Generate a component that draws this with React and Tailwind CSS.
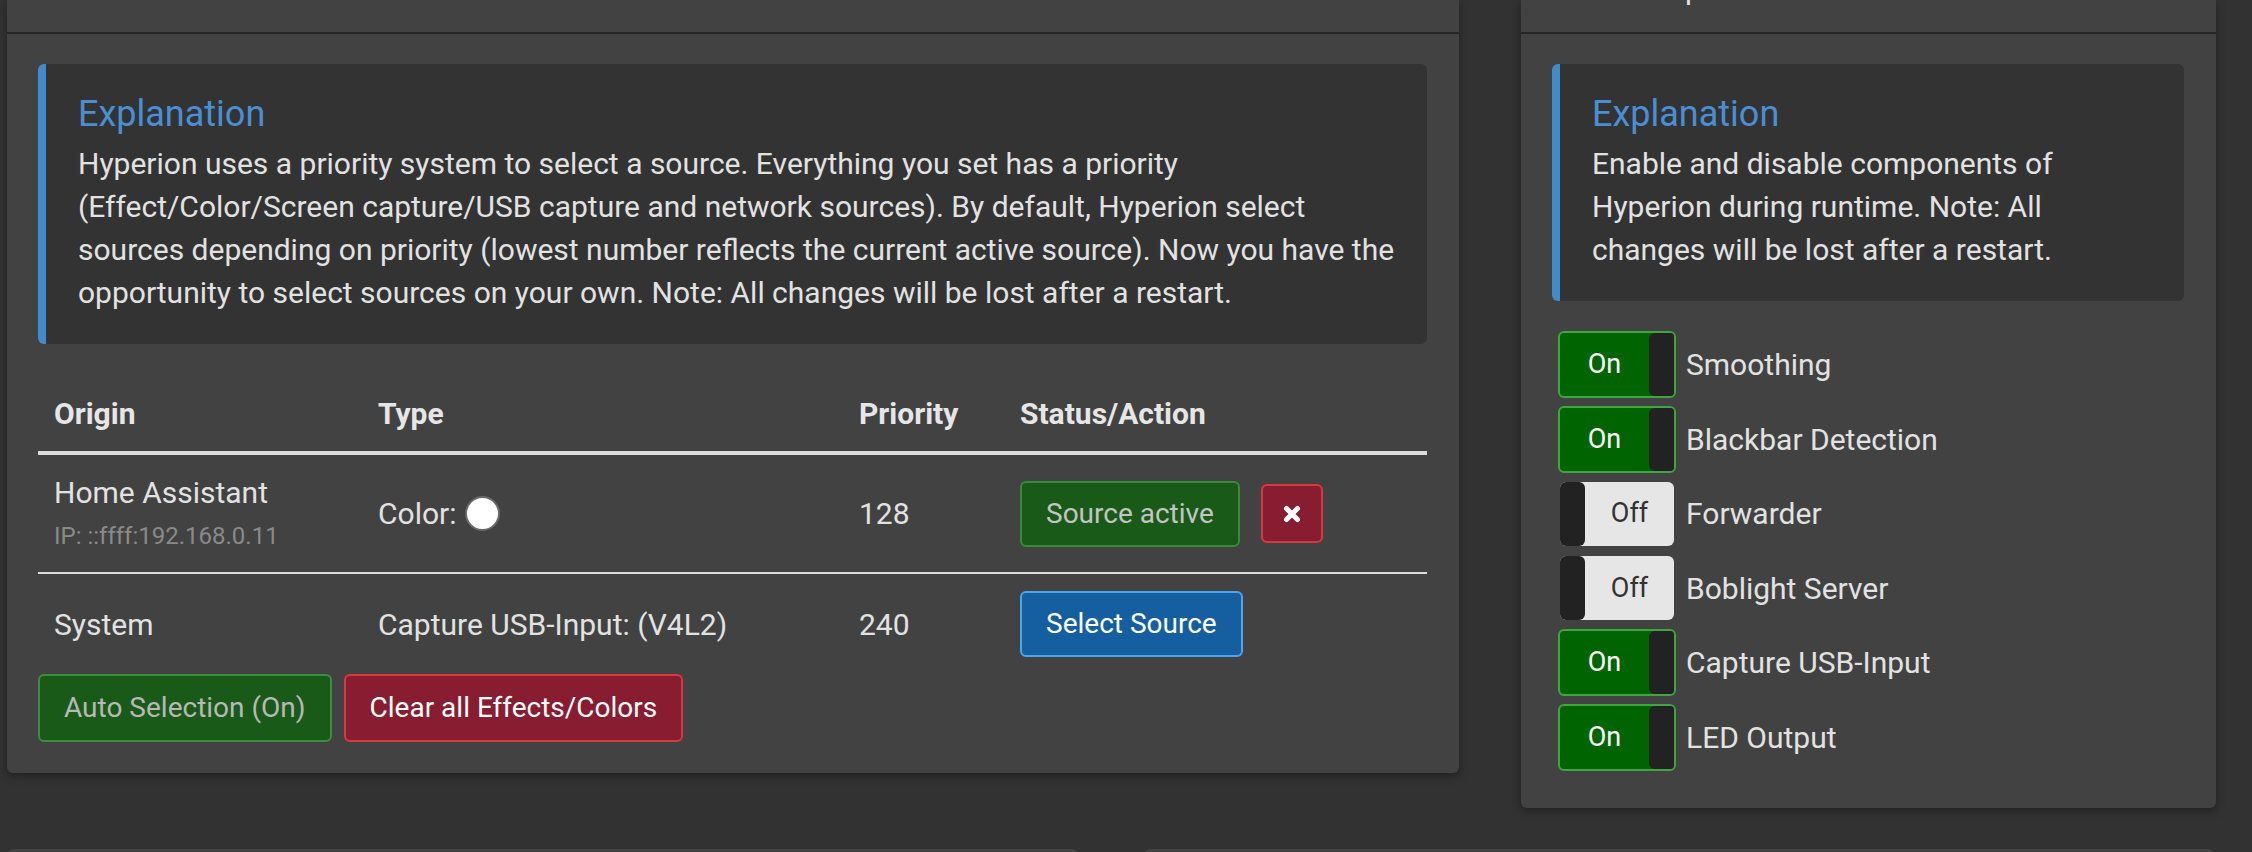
import React from "react";

function Callout({ lines }) {
  return (
    <div className="bg-[#333333] border-l-[8px] border-[#428bca] rounded-[6px] pl-[32px] pr-[24px] pt-[30px] pb-[30px]">
      <h4 className="text-[36px] leading-[40px] text-[#4a8fd3] mb-[8px]">Explanation</h4>
      <p className="text-[30px] leading-[43px] text-[#e2e2e2] whitespace-nowrap">
        {lines.map((l, i) => (
          <React.Fragment key={i}>
            {l}
            {i < lines.length - 1 && <br />}
          </React.Fragment>
        ))}
      </p>
    </div>
  );
}

function XIcon() {
  return (
    <svg width="18" height="18" viewBox="0 0 18 18">
      <path d="M3.5 3.5 L14.5 14.5 M14.5 3.5 L3.5 14.5" stroke="#ffffff" strokeWidth="5" strokeLinecap="round" />
    </svg>
  );
}

function Toggle({ on, label }) {
  return (
    <div className="flex items-center h-[67px]">
      <div className="w-[118px] h-[67px] shrink-0 flex items-center justify-center">
        {on ? (
          <div className="w-[118px] h-[67px] rounded-[6px] border-2 border-[#3fa63f] bg-[#006400] flex overflow-hidden">
            <span className="flex-1 flex items-center justify-center text-[27px] text-white">On</span>
            <span className="w-[25px] bg-[#222222] rounded-l-[6px]"></span>
          </div>
        ) : (
          <div className="w-[114px] h-[64px] rounded-[6px] bg-[#e6e6e6] flex overflow-hidden">
            <span className="w-[25px] bg-[#222222] rounded-r-[6px]"></span>
            <span className="flex-1 flex items-center justify-center text-[27px] text-[#333333]">Off</span>
          </div>
        )}
      </div>
      <span className="ml-[10px] text-[30px] leading-[43px] text-[#e2e2e2]">{label}</span>
    </div>
  );
}

export default function App() {
  return (
    <div className="w-[2252px] h-[852px] overflow-hidden bg-[#323232] font-['Roboto',sans-serif]">
      <div className="flex items-start pl-[7px] gap-[62px]">
        {/* Left panel */}
        <div className="w-[1452px] bg-[#424242] rounded-b-[6px] shadow-[0_3px_10px_rgba(0,0,0,0.35)]">
          <div className="h-[34px] border-b-2 border-[#262626]"></div>
          <div className="pt-[30px] pl-[31px] pr-[32px] pb-[31px]">
            <Callout
              lines={[
                "Hyperion uses a priority system to select a source. Everything you set has a priority",
                "(Effect/Color/Screen capture/USB capture and network sources). By default, Hyperion select",
                "sources depending on priority (lowest number reflects the current active source). Now you have the",
                "opportunity to select sources on your own. Note: All changes will be lost after a restart.",
              ]}
            />
            <div className="mt-[31px]">
              <div className="grid grid-cols-[324px_481px_161px_423px] h-[80px] items-center border-b-4 border-[#dcdcdc] font-bold text-[30px] leading-[43px] text-[#e6e6e6]">
                <div className="pl-[16px]">Origin</div>
                <div className="pl-[16px]">Type</div>
                <div className="pl-[16px]">Priority</div>
                <div className="pl-[16px]">Status/Action</div>
              </div>
              <div className="grid grid-cols-[324px_481px_161px_423px] h-[119px] items-center border-b-2 border-[#dcdcdc] text-[30px] leading-[43px] text-[#e2e2e2]">
                <div className="pl-[16px] pb-[4px] flex flex-col">
                  <span>Home Assistant</span>
                  <span className="mt-[5px] text-[24px] leading-[34px] text-[#8a8a8a]">IP: ::ffff:192.168.0.11</span>
                </div>
                <div className="pl-[16px] flex items-center gap-[9px]">
                  <span>Color:</span>
                  <span className="w-[35px] h-[35px] rounded-full bg-white border-2 border-[#6a6a6a]"></span>
                </div>
                <div className="pl-[16px]">128</div>
                <div className="pl-[16px] flex items-center gap-[21px]">
                  <span className="h-[66px] px-[24px] flex items-center border-2 border-[#3b8a3b] bg-[#1a5a19] rounded-[6px] text-[28px] leading-none text-[#c4c4c4]">
                    Source active
                  </span>
                  <span className="w-[62px] h-[59px] flex items-center justify-center border-2 border-[#d63b3b] bg-[#881c30] rounded-[6px]">
                    <XIcon />
                  </span>
                </div>
              </div>
              <div className="grid grid-cols-[324px_481px_161px_423px] h-[100px] items-center text-[30px] leading-[43px] text-[#e2e2e2]">
                <div className="pl-[16px]">System</div>
                <div className="pl-[16px]">Capture USB-Input: (V4L2)</div>
                <div className="pl-[16px]">240</div>
                <div className="pl-[16px] flex items-center">
                  <span className="h-[66px] px-[24px] flex items-center border-2 border-[#4ea5ef] bg-[#155e9f] rounded-[6px] text-[28px] leading-none text-white">
                    Select Source
                  </span>
                </div>
              </div>
            </div>
            <div className="flex gap-[12px]">
              <span className="h-[68px] px-[24px] flex items-center border-2 border-[#3e8d3e] bg-[#1a5a18] rounded-[6px] text-[28px] leading-none text-[#b8b8b8]">
                Auto Selection (On)
              </span>
              <span className="h-[68px] px-[24px] flex items-center border-2 border-[#d63a3a] bg-[#881c30] rounded-[6px] text-[28px] leading-none text-white">
                Clear all Effects/Colors
              </span>
            </div>
          </div>
        </div>

        {/* Right panel */}
        <div className="w-[695px] bg-[#424242] rounded-b-[6px] shadow-[0_3px_10px_rgba(0,0,0,0.35)]">
          <div className="h-[34px] overflow-hidden border-b-2 border-[#262626] pl-[101px]">
            <div className="-mt-[29px] text-[30px] leading-[36px] text-[#e2e2e2] whitespace-nowrap">Components control</div>
          </div>
          <div className="pt-[30px] pl-[31px] pr-[32px] pb-[37px]">
            <Callout
              lines={[
                "Enable and disable components of",
                "Hyperion during runtime. Note: All",
                "changes will be lost after a restart.",
              ]}
            />
            <div className="mt-[30px] pl-[6px] flex flex-col gap-[7.5px]">
              <Toggle on label="Smoothing" />
              <Toggle on label="Blackbar Detection" />
              <Toggle on={false} label="Forwarder" />
              <Toggle on={false} label="Boblight Server" />
              <Toggle on label="Capture USB-Input" />
              <Toggle on label="LED Output" />
            </div>
          </div>
        </div>
      </div>

      <div className="mt-[41px] flex pl-[7px] gap-[66px]">
        <div className="w-[1071px] h-[80px] bg-[#424242] rounded-t-[6px]"></div>
        <div className="w-[1070px] h-[80px] bg-[#424242] rounded-t-[6px]"></div>
      </div>
    </div>
  );
}
